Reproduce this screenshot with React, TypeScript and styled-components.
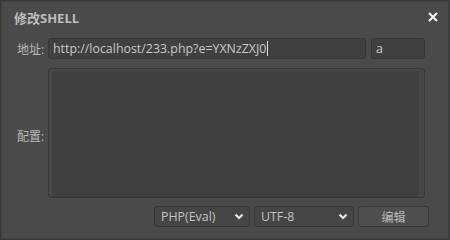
import React from 'react';
import styled, { createGlobalStyle } from 'styled-components';

const GlobalStyle = createGlobalStyle`
  html, body {
    margin: 0;
    padding: 0;
    background: #4a4a4a;
  }
  * {
    box-sizing: border-box;
  }
`;

const Dialog = styled.div`
  width: 450px;
  height: 240px;
  display: flex;
  flex-direction: column;
  background: #4a4a4a;
  border: 1px solid #383838;
  box-shadow: inset 1px 1px 0 #424242, inset -1px -1px 0 #424242;
  font-family: "Open Sans", "Noto Sans CJK SC", sans-serif;
  font-size: 12px;
  color: #c4c4c4;
`;

const TitleBar = styled.div`
  height: 30px;
  display: flex;
  align-items: center;
  justify-content: space-between;
  padding: 2px 10px 0 13px;
`;

const Title = styled.div`
  font-size: 13px;
  font-weight: bold;
  color: #bdbdbd;
`;

const CloseButton = styled.button`
  width: 12px;
  height: 12px;
  padding: 0;
  border: none;
  background: transparent;
  display: flex;
  align-items: center;
  justify-content: center;
  cursor: pointer;
`;

const Body = styled.div`
  display: grid;
  grid-template-columns: 31px 1fr;
  grid-template-rows: 21px 130px;
  row-gap: 9px;
  padding: 7px 24px 0 16px;
`;

const Label = styled.div<{ $drop?: number }>`
  display: flex;
  align-items: center;
  padding-top: ${p => p.$drop ?? 0}px;
  color: #b8b8b8;
  font-size: 12px;
`;

const InputRow = styled.div`
  display: flex;
  gap: 5px;
`;

const Field = styled.div<{ $width?: number }>`
  flex: ${p => (p.$width ? `0 0 ${p.$width}px` : '1')};
  height: 21px;
  display: flex;
  align-items: center;
  padding: 0 4px;
  background: #404040;
  border: 1px solid #363636;
  border-radius: 3px;
  color: #c8c8c8;
  font-size: 12.4px;
  white-space: nowrap;
  overflow: hidden;
`;

const Caret = styled.span`
  display: inline-block;
  width: 1px;
  height: 15px;
  margin-left: 1px;
  background: #e0e0e0;
`;

const TextArea = styled.div`
  background: #404040;
  border: 1px solid #383838;
  border-radius: 3px;
  box-shadow: inset 3px 2px 0 #474747, inset -5px 0 0 #474747;
`;

const Footer = styled.div`
  display: flex;
  justify-content: flex-end;
  gap: 4px;
  padding: 8px 20px 0 0;
`;

const Select = styled.div<{ $width: number }>`
  width: ${p => p.$width}px;
  height: 21px;
  display: flex;
  align-items: center;
  justify-content: space-between;
  padding: 0 5px 0 6px;
  background: #454545;
  border: 1px solid #363636;
  border-radius: 3px;
  color: #c4c4c4;
  font-size: 12.4px;
`;

const Button = styled.button`
  width: 71px;
  height: 21px;
  padding: 0;
  background: #4f4f4f;
  border: 1px solid #373737;
  border-radius: 3px;
  color: #bababa;
  font-family: "Open Sans", "Noto Sans CJK SC", sans-serif;
  font-size: 12px;
  cursor: pointer;
`;

const Chevron = () => (
  <svg width="10" height="7" viewBox="0 0 10 7">
    <path d="M1.5 1.5 L5 5 L8.5 1.5" fill="none" stroke="#e8e8e8" strokeWidth="2.2" />
  </svg>
);

const App: React.FC = () => {
  return (
    <>
      <GlobalStyle />
      <Dialog>
        <TitleBar>
          <Title>修改SHELL</Title>
          <CloseButton aria-label="close">
            <svg width="10" height="10" viewBox="0 0 10 10">
              <path d="M1 1 L9 9 M9 1 L1 9" stroke="#f2f2f2" strokeWidth="2.1" />
            </svg>
          </CloseButton>
        </TitleBar>
        <Body>
          <Label>地址:</Label>
          <InputRow>
            <Field>
              http://localhost/233.php?e=YXNzZXJ0
              <Caret />
            </Field>
            <Field $width={54}>a</Field>
          </InputRow>
          <Label $drop={5}>配置:</Label>
          <TextArea />
        </Body>
        <Footer>
          <Select $width={96}>
            PHP(Eval)
            <Chevron />
          </Select>
          <Select $width={100}>
            UTF-8
            <Chevron />
          </Select>
          <Button>编辑</Button>
        </Footer>
      </Dialog>
    </>
  );
};

export default App;
